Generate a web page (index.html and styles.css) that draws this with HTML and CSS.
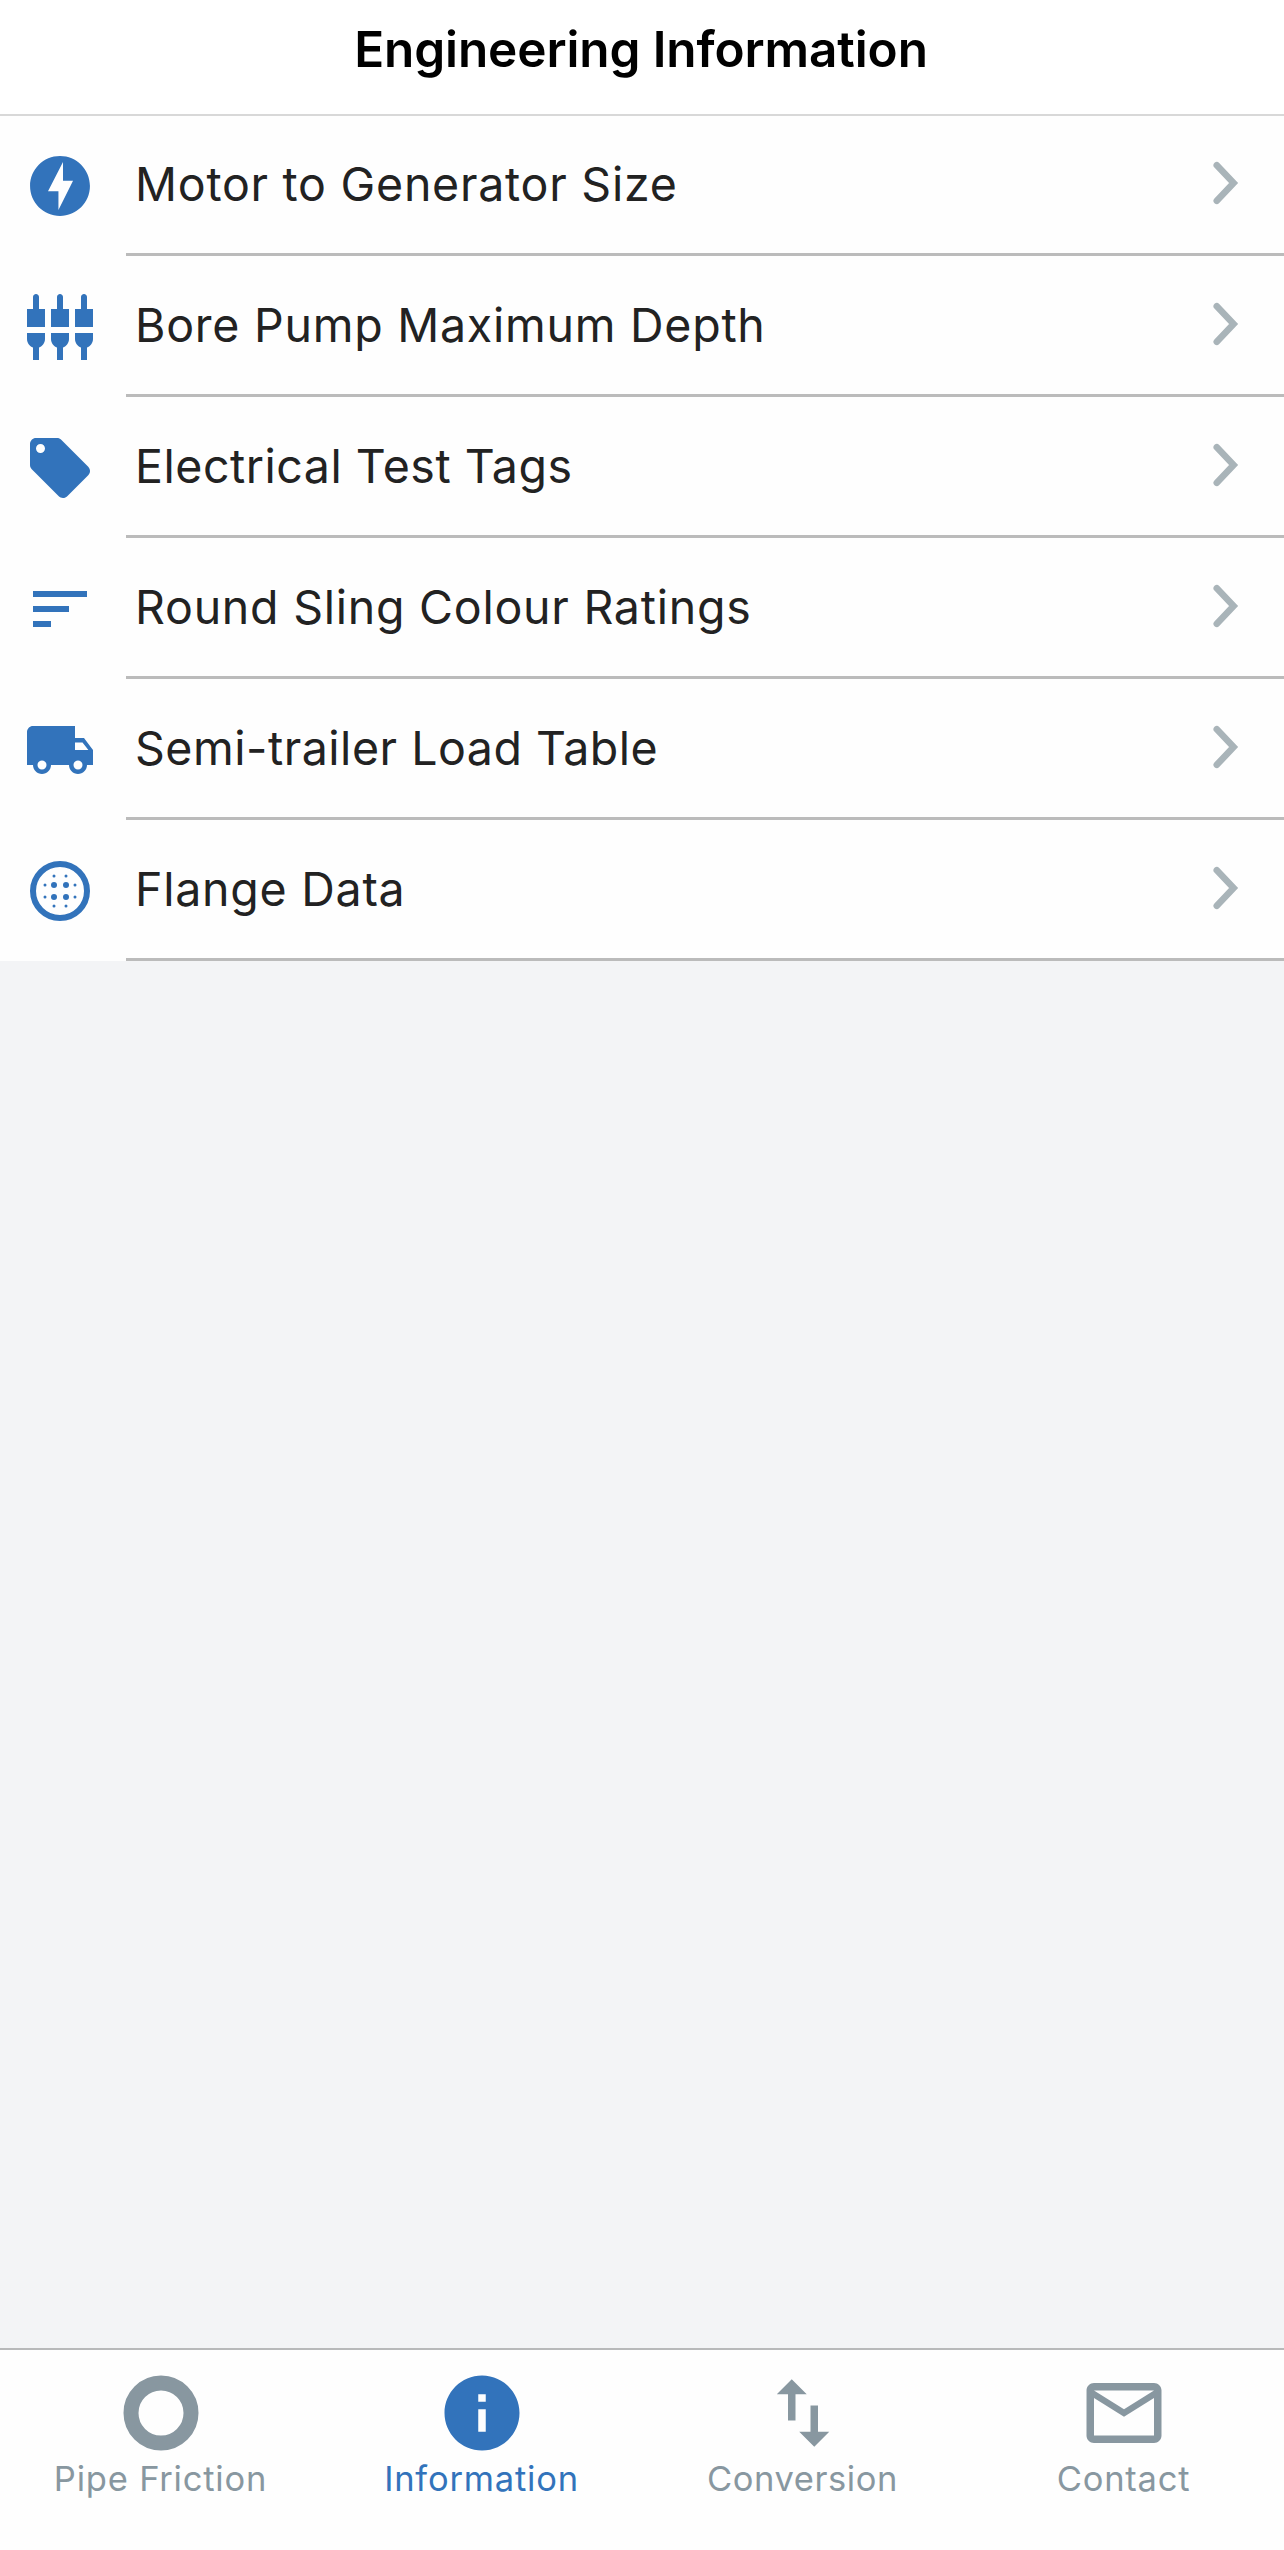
FILE: index.html
```html
<!DOCTYPE html>
<html lang="en">
<head>
<meta charset="utf-8">
<title>Engineering Information</title>
<link rel="stylesheet" href="styles.css">
</head>
<body>
<div class="screen">
  <header class="header"><h1 class="title">Engineering Information</h1></header>
  <main class="content">
    <ul class="list">
      <li class="item">
        <svg class="item-icon" viewBox="0 0 24 24"><path d="M12 2.02c-5.51 0-9.98 4.47-9.98 9.98s4.47 9.98 9.98 9.98 9.98-4.47 9.98-9.98S17.51 2.02 12 2.02zM11.48 20v-6.26H8L13 4v6.26h3.35L11.48 20z"/></svg>
        <div class="item-body"><span class="label">Motor to Generator Size</span><svg class="chevron" viewBox="0 0 30 48"><path d="M3.8 6.2L20.6 24L3.8 41.8"/></svg></div>
      </li>
      <li class="item">
        <svg class="item-icon" viewBox="0 0 24 24"><path d="M5 2c0-.55-.45-1-1-1s-1 .45-1 1v4H1v6h6V6H5V2zm4 14c0 1.3.84 2.4 2 2.82V23h2v-4.18c1.16-.41 2-1.51 2-2.82v-2H9v2zm-8 0c0 1.3.84 2.4 2 2.82V23h2v-4.18C6.16 18.4 7 17.3 7 16v-2H1v2zM21 6V2c0-.55-.45-1-1-1s-1 .45-1 1v4h-2v6h6V6h-2zm-8-4c0-.55-.45-1-1-1s-1 .45-1 1v4H9v6h6V6h-2V2zm4 14c0 1.3.84 2.4 2 2.82V23h2v-4.18c1.16-.41 2-1.51 2-2.82v-2h-6v2z"/></svg>
        <div class="item-body"><span class="label">Bore Pump Maximum Depth</span><svg class="chevron" viewBox="0 0 30 48"><path d="M3.8 6.2L20.6 24L3.8 41.8"/></svg></div>
      </li>
      <li class="item">
        <svg class="item-icon" viewBox="0 0 24 24"><path d="M21.41 11.58l-9-9C12.05 2.22 11.55 2 11 2H4c-1.1 0-2 .9-2 2v7c0 .55.22 1.05.59 1.42l9 9c.36.36.86.58 1.41.58.55 0 1.05-.22 1.41-.59l7-7c.37-.36.59-.86.59-1.41 0-.55-.23-1.06-.59-1.42zM5.5 7C4.67 7 4 6.33 4 5.5S4.67 4 5.5 4 7 4.67 7 5.5 6.33 7 5.5 7z"/></svg>
        <div class="item-body"><span class="label label-snug">Electrical Test Tags</span><svg class="chevron" viewBox="0 0 30 48"><path d="M3.8 6.2L20.6 24L3.8 41.8"/></svg></div>
      </li>
      <li class="item">
        <svg class="item-icon" viewBox="0 0 24 24"><path d="M3 18h6v-2H3v2zM3 6v2h18V6H3zm0 7h12v-2H3v2z"/></svg>
        <div class="item-body"><span class="label">Round Sling Colour Ratings</span><svg class="chevron" viewBox="0 0 30 48"><path d="M3.8 6.2L20.6 24L3.8 41.8"/></svg></div>
      </li>
      <li class="item">
        <svg class="item-icon" viewBox="0 0 24 24"><path d="M20 8h-3V4H3c-1.1 0-2 .9-2 2v11h2c0 1.66 1.34 3 3 3s3-1.34 3-3h6c0 1.66 1.34 3 3 3s3-1.34 3-3h2v-5l-3-4zM6 18.5c-.83 0-1.5-.67-1.5-1.5s.67-1.5 1.5-1.5 1.5.67 1.5 1.5-.67 1.5-1.5 1.5zm13.5-9l1.96 2.5H17V9.5h2.5zm-1.5 9c-.83 0-1.5-.67-1.5-1.5s.67-1.5 1.5-1.5 1.5.67 1.5 1.5-.67 1.5-1.5 1.5z"/></svg>
        <div class="item-body"><span class="label label-snug">Semi-trailer Load Table</span><svg class="chevron" viewBox="0 0 30 48"><path d="M3.8 6.2L20.6 24L3.8 41.8"/></svg></div>
      </li>
      <li class="item">
        <svg class="item-icon" viewBox="0 0 24 24"><circle cx="12" cy="12" r="9" fill="none" stroke="currentColor" stroke-width="2"/><circle cx="10" cy="10" r="1"/><circle cx="14" cy="10" r="1"/><circle cx="10" cy="14" r="1"/><circle cx="14" cy="14" r="1"/><circle cx="10" cy="7" r=".5"/><circle cx="14" cy="7" r=".5"/><circle cx="10" cy="17" r=".5"/><circle cx="14" cy="17" r=".5"/><circle cx="7" cy="10" r=".5"/><circle cx="7" cy="14" r=".5"/><circle cx="17" cy="10" r=".5"/><circle cx="17" cy="14" r=".5"/></svg>
        <div class="item-body"><span class="label">Flange Data</span><svg class="chevron" viewBox="0 0 30 48"><path d="M3.8 6.2L20.6 24L3.8 41.8"/></svg></div>
      </li>
    </ul>
  </main>
  <nav class="tabs">
    <a class="tab"><svg class="tab-icon" viewBox="0 0 24 24"><circle cx="12" cy="12" r="8" fill="none" stroke="currentColor" stroke-width="4"/></svg><span class="tab-label">Pipe Friction</span></a>
    <a class="tab active"><svg class="tab-icon" viewBox="0 0 24 24"><path d="M12 2C6.48 2 2 6.48 2 12s4.48 10 10 10 10-4.48 10-10S17.52 2 12 2zm1 15h-2v-6h2v6zm0-8h-2V7h2v2z"/></svg><span class="tab-label">Information</span></a>
    <a class="tab"><svg class="tab-icon" viewBox="0 0 24 24"><path d="M9 3L5 6.99h3V14h2V6.99h3L9 3zm7 14.01V10h-2v7.01h-3L15 21l4-3.99h-3z"/></svg><span class="tab-label tab-label-snug">Conversion</span></a>
    <a class="tab"><svg class="tab-icon" viewBox="0 0 24 24"><path d="M20 4H4c-1.1 0-1.99.9-1.99 2L2 18c0 1.1.9 2 2 2h16c1.1 0 2-.9 2-2V6c0-1.1-.9-2-2-2zm0 14H4V8l8 5 8-5v10zm-8-7L4 6h16l-8 5z"/></svg><span class="tab-label">Contact</span></a>
  </nav>
</div>
</body>
</html>
```
FILE: styles.css
```css
* { box-sizing: border-box; }
body { margin: 0; font-family: Inter, "Liberation Sans", sans-serif; }

.screen { display: flex; flex-direction: column; width: 1284px; height: 2550px; background: #f3f4f6; }

.header { height: 116px; padding-right: 2px; background: #fff; border-bottom: 2px solid #d8d8d8; text-align: center; }
.title { margin: 0; font-size: 49.5px; line-height: 98px; font-weight: 600; letter-spacing: -0.1px; color: #000; }

.content { flex: 1; }
.list { margin: 0; padding: 0; list-style: none; background: #fefefe; }
.item { display: flex; align-items: center; height: 141px; padding-left: 24px; color: #3273bb; }
.item:first-child { height: 140px; }
.item-icon { width: 72px; height: 72px; margin-right: 30px; fill: currentColor; }
.item-body { flex: 1; align-self: stretch; display: flex; align-items: center; justify-content: space-between; padding: 0 41px 3px 9px; border-bottom: 3px solid #bbb; }
.label { padding-top: 2px; font-size: 46.5px; line-height: 60px; letter-spacing: 0.75px; color: #222; white-space: nowrap; }
.label-snug { letter-spacing: 0.52px; }
.chevron { width: 30px; height: 48px; fill: none; stroke: #a9b4b9; stroke-width: 6.6; stroke-linecap: round; stroke-linejoin: miter; }

.tabs { display: flex; height: 202px; background: #fefefe; border-top: 2px solid #b8b9ba; }
.tab { flex: 1; display: flex; flex-direction: column; align-items: center; padding-top: 18px; color: #8897a0; }
.tab.active { color: #3273bb; }
.tab-icon { width: 90px; height: 90px; fill: currentColor; }
.tab-label { font-size: 34.5px; line-height: 42px; letter-spacing: 0.8px; }
.tab-label-snug { letter-spacing: 0.57px; }
```
